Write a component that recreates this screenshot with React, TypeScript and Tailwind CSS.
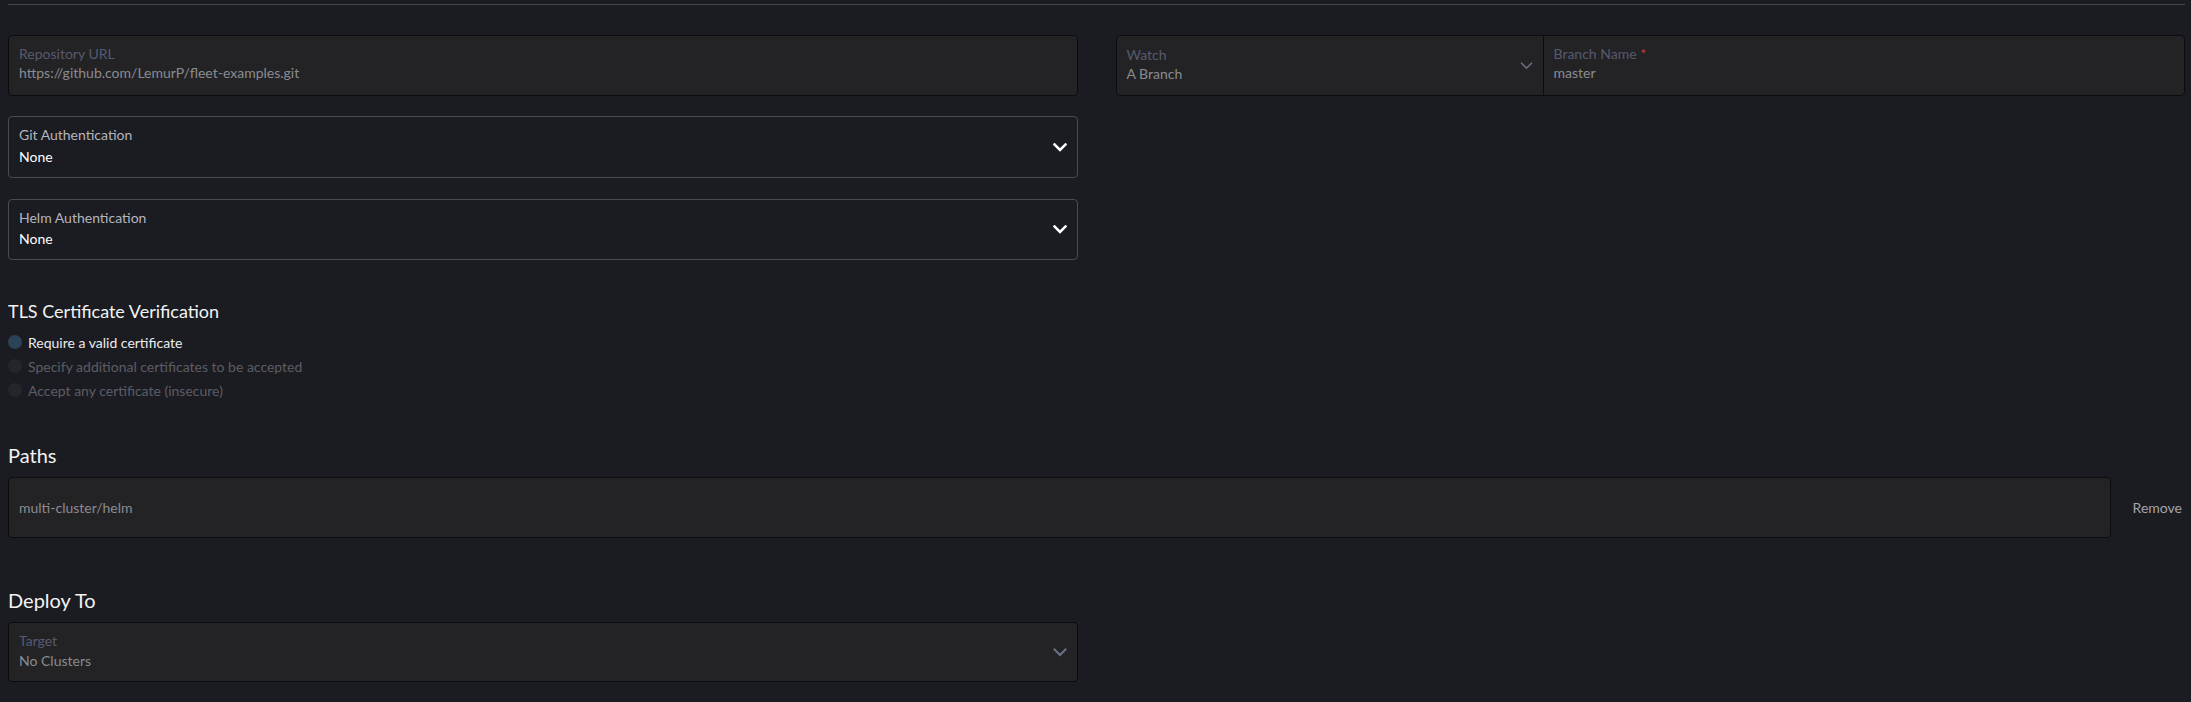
import React from "react";

function Chevron({ className, stroke = 2.5 }: { className?: string; stroke?: number }) {
  return (
    <svg className={className} viewBox="0 0 14 9" fill="none">
      <path d="M1.5 1.5 L7 7 L12.5 1.5" stroke="currentColor" strokeWidth={stroke} strokeLinecap="square" />
    </svg>
  );
}

function Radio({ label, active }: { label: string; active?: boolean }) {
  return (
    <div className="flex h-[24px] items-center gap-[6px]">
      <span
        className={
          active
            ? "h-[14px] w-[14px] rounded-full bg-[#2c4257]"
            : "h-[14px] w-[14px] rounded-full bg-[#25262b]"
        }
      />
      <span className={active ? "text-[14px] text-[#ececef]" : "text-[14px] text-[#5b5d66]"}>{label}</span>
    </div>
  );
}

export default function App() {
  return (
    <div className="min-h-screen bg-[#1b1c21] pl-[8px] pr-[6px] pt-[4px] font-[family-name:Lato,sans-serif] text-[14px]">
      <div className="h-px bg-[#46474d]" />

      <div className="mt-[30px] grid grid-cols-2 gap-x-[38px]">
        <div className="flex flex-col">
          <div className="h-[61px] rounded-[4px] border border-[#0c0c0e] bg-[#232326] px-[10px] pt-[8px]">
            <div className="leading-[19px] text-[#565a6e]">Repository URL</div>
            <div className="leading-[19px] text-[#8a8b90]">https://github.com/LemurP/fleet-examples.git</div>
          </div>

          <div className="mt-[20px] flex h-[62px] items-center justify-between rounded-[4px] border border-[#4a4b51] px-[10px]">
            <div className="flex flex-col pb-[4px]">
              <div className="leading-[19px] text-[#b3b5bf]">Git Authentication</div>
              <div className="mt-[3px] leading-[19px] text-white">None</div>
            </div>
            <Chevron className="h-[9px] w-[14px] text-white" />
          </div>

          <div className="mt-[21px] flex h-[61px] items-center justify-between rounded-[4px] border border-[#4a4b51] px-[10px]">
            <div className="flex flex-col pb-[4px]">
              <div className="leading-[19px] text-[#b3b5bf]">Helm Authentication</div>
              <div className="mt-[2px] leading-[19px] text-white">None</div>
            </div>
            <Chevron className="h-[9px] w-[14px] text-white" />
          </div>
        </div>

        <div>
          <div className="flex h-[61px] rounded-[4px] border border-[#0c0c0e] bg-[#232326]">
            <div className="flex w-[40%] items-center justify-between border-r border-[#0c0c0e] pl-[10px] pr-[10px]">
              <div className="flex flex-col pb-[4px]">
                <div className="leading-[19px] text-[#565a6e]">Watch</div>
                <div className="leading-[19px] text-[#8a8b90]">A Branch</div>
              </div>
              <Chevron className="h-[8px] w-[13px] text-[#6b6f80]" stroke={1.8} />
            </div>
            <div className="flex flex-1 flex-col px-[10px] pt-[8px]">
              <div className="leading-[19px] text-[#565a6e]">
                Branch Name <span className="text-[#d9343a]">*</span>
              </div>
              <div className="leading-[19px] text-[#8a8b90]">master</div>
            </div>
          </div>
        </div>
      </div>

      <h4 className="mt-[40px] text-[18px] leading-[22px] text-[#f2f2f4]">TLS Certificate Verification</h4>
      <div className="mt-[8px] flex flex-col">
        <Radio label="Require a valid certificate" active />
        <Radio label="Specify additional certificates to be accepted" />
        <Radio label="Accept any certificate (insecure)" />
      </div>

      <h3 className="mt-[41px] text-[20px] leading-[24px] text-[#f2f2f4]">Paths</h3>
      <div className="mt-[10px] flex items-center">
        <div className="flex h-[61px] flex-1 items-center rounded-[4px] border border-[#0c0c0e] bg-[#232326] px-[10px]">
          <span className="text-[#8a8b90]">multi-cluster/helm</span>
        </div>
        <div className="flex w-[74px] justify-end pr-[3px] text-[#a3a4ab]">Remove</div>
      </div>

      <h3 className="mt-[50px] text-[20px] leading-[24px] text-[#f2f2f4]">Deploy To</h3>
      <div className="mt-[10px] grid grid-cols-2 gap-x-[38px]">
        <div className="flex h-[60px] items-start justify-between rounded-[4px] border border-[#0c0c0e] bg-[#232326] px-[10px] pt-[8px]">
          <div className="flex flex-col">
            <div className="leading-[19px] text-[#565a6e]">Target</div>
            <div className="mt-[1px] leading-[19px] text-[#8a8b90]">No Clusters</div>
          </div>
          <Chevron className="mt-[17px] h-[9px] w-[14px] text-[#6b7287]" stroke={2} />
        </div>
        <div />
      </div>
    </div>
  );
}
